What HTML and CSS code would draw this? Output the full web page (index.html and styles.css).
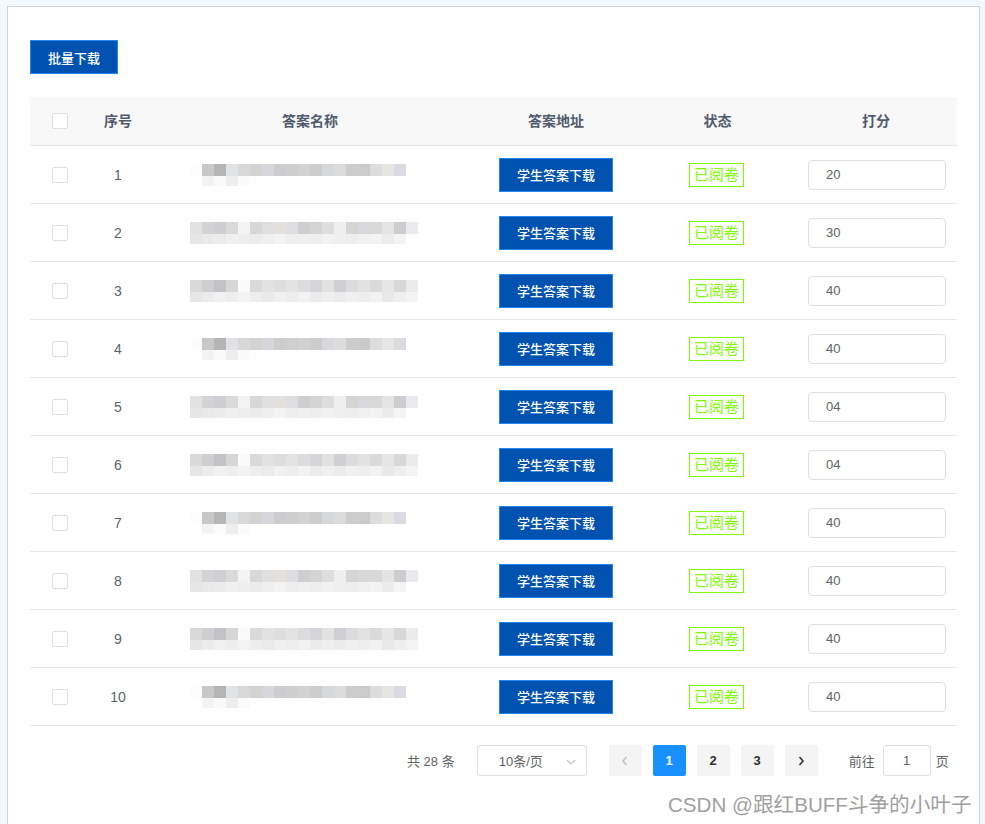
FILE: index.html
```html
<!DOCTYPE html>
<html lang="zh-CN">
<head>
<meta charset="utf-8">
<title>答案列表</title>
<link rel="stylesheet" href="styles.css">
</head>
<body>
<div class="panel">
  <div class="toolbar"><button class="btn-primary">批量下载</button></div>
  <div class="table">
    <div class="row head">
      <div class="cell"><span class="checkbox"></span></div>
      <div class="cell">序号</div>
      <div class="cell">答案名称</div>
      <div class="cell">答案地址</div>
      <div class="cell">状态</div>
      <div class="cell">打分</div>
    </div>
    <div class="row">
      <div class="cell"><span class="checkbox"></span></div>
      <div class="cell num">1</div>
      <div class="cell"><div class="blur blur-a"></div></div>
      <div class="cell"><button class="btn-dl">学生答案下载</button></div>
      <div class="cell"><span class="tag">已阅卷</span></div>
      <div class="cell"><div class="input">20</div></div>
    </div>
    <div class="row">
      <div class="cell"><span class="checkbox"></span></div>
      <div class="cell num">2</div>
      <div class="cell"><div class="blur blur-b"></div></div>
      <div class="cell"><button class="btn-dl">学生答案下载</button></div>
      <div class="cell"><span class="tag">已阅卷</span></div>
      <div class="cell"><div class="input">30</div></div>
    </div>
    <div class="row">
      <div class="cell"><span class="checkbox"></span></div>
      <div class="cell num">3</div>
      <div class="cell"><div class="blur blur-c"></div></div>
      <div class="cell"><button class="btn-dl">学生答案下载</button></div>
      <div class="cell"><span class="tag">已阅卷</span></div>
      <div class="cell"><div class="input">40</div></div>
    </div>
    <div class="row">
      <div class="cell"><span class="checkbox"></span></div>
      <div class="cell num">4</div>
      <div class="cell"><div class="blur blur-a"></div></div>
      <div class="cell"><button class="btn-dl">学生答案下载</button></div>
      <div class="cell"><span class="tag">已阅卷</span></div>
      <div class="cell"><div class="input">40</div></div>
    </div>
    <div class="row">
      <div class="cell"><span class="checkbox"></span></div>
      <div class="cell num">5</div>
      <div class="cell"><div class="blur blur-b"></div></div>
      <div class="cell"><button class="btn-dl">学生答案下载</button></div>
      <div class="cell"><span class="tag">已阅卷</span></div>
      <div class="cell"><div class="input">04</div></div>
    </div>
    <div class="row">
      <div class="cell"><span class="checkbox"></span></div>
      <div class="cell num">6</div>
      <div class="cell"><div class="blur blur-c"></div></div>
      <div class="cell"><button class="btn-dl">学生答案下载</button></div>
      <div class="cell"><span class="tag">已阅卷</span></div>
      <div class="cell"><div class="input">04</div></div>
    </div>
    <div class="row">
      <div class="cell"><span class="checkbox"></span></div>
      <div class="cell num">7</div>
      <div class="cell"><div class="blur blur-a"></div></div>
      <div class="cell"><button class="btn-dl">学生答案下载</button></div>
      <div class="cell"><span class="tag">已阅卷</span></div>
      <div class="cell"><div class="input">40</div></div>
    </div>
    <div class="row">
      <div class="cell"><span class="checkbox"></span></div>
      <div class="cell num">8</div>
      <div class="cell"><div class="blur blur-b"></div></div>
      <div class="cell"><button class="btn-dl">学生答案下载</button></div>
      <div class="cell"><span class="tag">已阅卷</span></div>
      <div class="cell"><div class="input">40</div></div>
    </div>
    <div class="row">
      <div class="cell"><span class="checkbox"></span></div>
      <div class="cell num">9</div>
      <div class="cell"><div class="blur blur-c short"></div></div>
      <div class="cell"><button class="btn-dl">学生答案下载</button></div>
      <div class="cell"><span class="tag">已阅卷</span></div>
      <div class="cell"><div class="input">40</div></div>
    </div>
    <div class="row">
      <div class="cell"><span class="checkbox"></span></div>
      <div class="cell num">10</div>
      <div class="cell"><div class="blur blur-a"></div></div>
      <div class="cell"><button class="btn-dl">学生答案下载</button></div>
      <div class="cell"><span class="tag">已阅卷</span></div>
      <div class="cell"><div class="input">40</div></div>
    </div>
  </div>
  <div class="pager">
    <span class="total">共 28 条</span>
    <div class="select">
      <span>10条/页</span>
      <svg class="arrow" width="12" height="12" viewBox="0 0 12 12"><path d="M2 4 L6 8 L10 4" fill="none" stroke="#c0c4cc" stroke-width="1.2"/></svg>
    </div>
    <div class="pages">
      <span class="pg disabled"><svg width="10" height="12" viewBox="0 0 10 12"><path d="M6.5 2 L3 6 L6.5 10" fill="none" stroke="#c0c4cc" stroke-width="1.6"/></svg></span>
      <span class="pg active">1</span>
      <span class="pg">2</span>
      <span class="pg">3</span>
      <span class="pg"><svg width="10" height="12" viewBox="0 0 10 12"><path d="M3.5 2 L7 6 L3.5 10" fill="none" stroke="#303133" stroke-width="1.6"/></svg></span>
    </div>
    <span class="jump">前往</span>
    <div class="jump-input">1</div>
    <span class="jump-suffix">页</span>
  </div>
</div>
<div class="watermark">CSDN @跟红BUFF斗争的小叶子</div>
</body>
</html>
```
FILE: styles.css
```css
* { box-sizing: border-box; }
html, body { height: 100%; }
body {
  margin: 0;
  background: #f3f8fd;
  font-family: "Liberation Sans", "Noto Sans CJK SC", sans-serif;
  color: #606266;
  overflow: hidden;
}
.panel {
  margin: 6px 5px 0 7px;
  background: #fff;
  border: 1px solid #d2d2d2;
  border-bottom: none;
  padding: 33px 22px 40px 22px;
  min-height: 830px;
}
.toolbar { height: 34px; margin-bottom: 23px; }
.btn-primary {
  width: 88px;
  height: 34px;
  background: #0052b0;
  border: 1px solid #1e88f0;
  color: #fff;
  font-family: inherit;
  font-size: 13px;
  font-weight: 500;
  padding: 0;
  cursor: pointer;
}
.table { width: 927px; }
.row {
  display: grid;
  grid-template-columns: 58px 60px 324px 168px 155px 162px;
  height: 58px;
  border-bottom: 1px solid #e8e8ec;
}
.row.head {
  height: 49px;
  background: #f8f8f8;
  font-weight: 700;
  color: #515a6e;
}
.cell {
  display: flex;
  align-items: center;
  justify-content: center;
  font-size: 14px;
  line-height: 20px;
}
.head .cell { font-size: 14px; }
.checkbox {
  display: inline-block;
  width: 16px;
  height: 16px;
  border: 1px solid #dcdfe6;
  border-radius: 2px;
  background: #fff;
  margin-left: 2px;
}
.num { color: #606266; }
.blur {
  width: 240px;
  height: 22px;
  filter: blur(0.6px);
  background-repeat: no-repeat;
  background-size: 100% 12px, 100% 10px;
  background-position: 0 0, 0 12px;
}
.blur-a {
  background-image:
    linear-gradient(90deg, #fdfdfd 0 12px, #c8c8c8 12px 24px, #b5b5b5 24px 36px, #e0e2e6 36px 48px, #d8d8d8 48px 60px, #d6d2d2 60px 72px, #d4d7dc 72px 84px, #cdcdcd 84px 96px, #cfcfcf 96px 108px, #d2d2d2 108px 120px, #cdcdcd 120px 132px, #d6d8dc 132px 144px, #dcdcdc 144px 156px, #cccccc 156px 168px, #cbcbcb 168px 180px, #dddddd 180px 192px, #e7e4e2 192px 204px, #d8dbe2 204px 216px, #fff 216px),
    linear-gradient(90deg, #fff 0 12px, #f4f4f4 12px 24px, #fafafa 24px 36px, #eeeeee 36px 48px, #fbfbfb 48px 60px, #fff 60px);
}
.blur-b {
  background-image:
    linear-gradient(90deg, #e2e2e2 0 12px, #d3d3d3 12px 24px, #cfcfd3 24px 36px, #dadada 36px 48px, #f3f3f3 48px 60px, #d8d8d8 60px 72px, #e0e0e0 72px 84px, #e3e0de 84px 96px, #dcdee2 96px 108px, #cfcfcf 108px 120px, #d4d4d4 120px 132px, #dedede 132px 144px, #efefef 144px 156px, #d8d4d4 156px 168px, #d6d8dc 168px 180px, #d8d8d8 180px 192px, #e4e4e4 192px 204px, #cdcdd1 204px 216px, #e8eaec 216px 228px, #fff 228px),
    linear-gradient(90deg, #e6e6e6 0 12px, #e9e9e9 12px 24px, #ececec 24px 36px, #f0f0f0 36px 48px, #eeeeee 48px 60px, #ececec 60px 72px, #efefef 72px 84px, #f3f3f3 84px 96px, #eeeeee 96px 108px, #f0f0f0 108px 120px, #eeeeee 120px 132px, #f2f2f2 132px 144px, #efefef 144px 156px, #eeeeee 156px 168px, #f1f1f1 168px 180px, #f3f3f3 180px 192px, #ececec 192px 204px, #f4f4f4 204px 216px, #fff 216px);
}
.blur-c {
  background-image:
    linear-gradient(90deg, #d9d9d9 0 12px, #cfcfcf 12px 24px, #c3c3c7 24px 36px, #d6d6d6 36px 48px, #fafafa 48px 60px, #dadada 60px 72px, #e2e2e4 72px 84px, #dedede 84px 96px, #e3e3e3 96px 108px, #dcdcdc 108px 120px, #d5d5d9 120px 132px, #e2e2e2 132px 144px, #d0d0d4 144px 156px, #dcdcdc 156px 168px, #e2e2e2 168px 180px, #dadada 180px 192px, #e6e6e6 192px 204px, #d8d8d8 204px 216px, #ebebeb 216px 228px, #fff 228px),
    linear-gradient(90deg, #e6e6e6 0 12px, #ececec 12px 24px, #f1f1f1 24px 36px, #eeeeee 36px 48px, #f3f3f3 48px 60px, #eeeeee 60px 72px, #eaeaea 72px 84px, #f0f0f0 84px 96px, #ededed 96px 108px, #f2f2f2 108px 120px, #ebebeb 120px 132px, #efefef 132px 144px, #ececec 144px 156px, #f0f0f0 156px 168px, #eeeeee 168px 180px, #f2f2f2 180px 192px, #e9e9e9 192px 204px, #efefef 204px 216px, #f4f4f4 216px 228px, #fff 228px);
}
.blur.short { width: 228px; margin-right: 12px; }
.btn-dl {
  width: 114px;
  height: 34px;
  background: #0052b0;
  border: 1px solid #1e88f0;
  color: #fff;
  font-family: inherit;
  font-size: 13px;
  font-weight: 500;
  padding: 0;
}
.tag {
  display: inline-flex;
  align-items: center;
  justify-content: center;
  width: 55px;
  height: 24px;
  border: 1px solid #7cfc00;
  color: #7cfc00;
  font-size: 15px;
  margin-left: -2px;
}
.input {
  width: 138px;
  height: 30px;
  border: 1px solid #dcdfe6;
  border-radius: 4px;
  padding-left: 17px;
  font-size: 13px;
  line-height: 28px;
  color: #606266;
  margin-left: 2px;
}
.pager {
  display: flex;
  align-items: center;
  height: 31px;
  margin-top: 19px;
  padding-left: 377px;
  font-size: 13px;
  color: #606266;
}
.total { margin-right: 22px; }
.select {
  position: relative;
  width: 110px;
  height: 31px;
  border: 1px solid #dcdfe6;
  border-radius: 3px;
  display: flex;
  align-items: center;
  padding-left: 21px;
  font-size: 13px;
  color: #606266;
  margin-right: 22px;
}
.arrow { position: absolute; right: 9px; top: 10px; }
.pages { display: flex; gap: 11px; }
.pg {
  width: 33px;
  height: 31px;
  background: #f4f4f5;
  border-radius: 2px;
  display: flex;
  align-items: center;
  justify-content: center;
  font-weight: 700;
  font-size: 13px;
  color: #303133;
}
.pg.active { background: #1890ff; color: #fff; }
.jump { margin-left: 31px; margin-right: 8px; }
.jump-input {
  width: 48px;
  height: 31px;
  border: 1px solid #dcdfe6;
  border-radius: 3px;
  display: flex;
  align-items: center;
  justify-content: center;
  font-size: 13px;
  color: #606266;
}
.jump-suffix { margin-left: 5px; }
.watermark {
  position: absolute;
  left: 668px;
  top: 792px;
  font-size: 20.6px;
  line-height: 26px;
  color: #a0a0a0;
  text-shadow: 0 0 1px #fff, 0 0 2px #fff;
  white-space: nowrap;
}
```
